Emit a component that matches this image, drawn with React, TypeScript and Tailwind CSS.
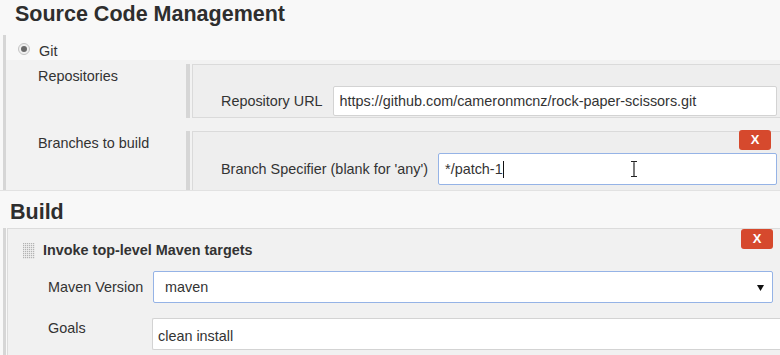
import React from "react";

function XButton({ className }: { className: string }) {
  return (
    <div
      className={`absolute w-[32px] h-[20px] rounded-[3px] bg-[#d6492d] text-white font-bold text-[13px] leading-[20px] text-center ${className}`}
    >
      X
    </div>
  );
}

function DragHandle() {
  const dots: React.ReactNode[] = [];
  for (let r = 0; r < 8; r++) {
    for (let c = 0; c < 6; c++) {
      dots.push(<rect key={`${r}-${c}`} x={c * 2} y={r * 2} width="1.2" height="1.2" fill="#b3b3b3" />);
    }
  }
  return (
    <svg width="12" height="16" viewBox="0 0 12 16" className="shrink-0">
      {dots}
    </svg>
  );
}

export default function App() {
  return (
    <div className="w-[780px] h-[355px] overflow-hidden bg-[#f8f8f8] text-[#333] font-['Liberation_Sans',Arial,sans-serif] text-[14.4px]">
      {/* Source Code Management header */}
      <div className="h-[35px] pl-[15px] pt-[1px]">
        <h2 className="text-[21.5px] font-bold leading-[26px] text-[#2e2e2e]">Source Code Management</h2>
      </div>

      {/* SCM body */}
      <div className="ml-[3px] border-l-[3px] border-[#d6d6d6] h-[155px] flex flex-col">
        {/* Git row */}
        <div className="h-[25px] flex items-start pt-[8px] pl-[12px]">
          <div className="w-[12px] h-[12px] rounded-full border border-[#c4c4c4] bg-[#f0f0f0] flex items-center justify-center mt-[0px]">
            <div className="w-[6px] h-[6px] rounded-full bg-[#6a6a6a]" />
          </div>
          <span className="ml-[9px] leading-[16px]">Git</span>
        </div>

        <div className="flex-1 flex flex-col bg-[#f2f2f2]">
          {/* Repositories row */}
          <div className="h-[64px] flex">
            <div className="w-[180px] pl-[32px] pt-[8px] leading-[16px]">Repositories</div>
            <div className="flex-1 flex pt-[4px] pb-[6px]">
              <div className="w-[4px] bg-[#d6d6d6]" />
              <div className="flex-1 ml-[2px] bg-[#eeeeee] border-t border-b border-l border-[#dadada] flex items-end pb-[1px] pl-[28px] pr-[3px]">
                <span className="leading-[16px] mb-[7px]">Repository URL</span>
                <div className="ml-[10px] flex-1 h-[30px] bg-white border border-[#d3d3d3] rounded-[2px] flex items-center pl-[6px] leading-[16px]">
                  https://github.com/cameronmcnz/rock-paper-scissors.git
                </div>
              </div>
            </div>
          </div>

          {/* Branches row */}
          <div className="flex-1 flex">
            <div className="w-[180px] pl-[32px] pt-[11px] leading-[16px]">Branches to build</div>
            <div className="flex-1 flex pt-[7px]">
              <div className="w-[4px] bg-[#d6d6d6]" />
              <div className="relative flex-1 ml-[2px] bg-[#eeeeee] border-t border-l border-[#dadada] flex items-start pt-[21px] pl-[28px] pr-[3px]">
                <XButton className="right-[9px] top-[-2px]" />
                <span className="leading-[16px] mt-[8px]">Branch Specifier (blank for 'any')</span>
                <div className="relative ml-[10px] flex-1 h-[32px] bg-white border border-[#95b3e6] rounded-[2px] flex items-center pl-[6px] leading-[16px]">
                  <span>*/patch-1</span>
                  <span className="inline-block w-[1px] h-[17px] bg-[#111]" />
                  <svg className="absolute left-[191px] top-[6px]" width="8" height="18" viewBox="0 0 8 18">
                    <path d="M1 1.5h2.5l0.5 0.5 0.5-0.5H7M4 2v14M1 16.5h2.5l0.5-0.5 0.5 0.5H7" stroke="#222" strokeWidth="1.2" fill="none" />
                  </svg>
                </div>
              </div>
            </div>
          </div>
        </div>
      </div>

      {/* Build header */}
      <div className="h-[38px] border-t border-[#e2e2e2] pl-[10px] pt-[9px]">
        <h2 className="text-[21.5px] font-bold leading-[24px] text-[#2e2e2e]">Build</h2>
      </div>

      {/* Builder */}
      <div className="ml-[3px] border-l-[3px] border-[#d6d6d6] h-[127px] flex">
        <div className="relative flex-1 ml-[1px] bg-[#f1f1f1] border-t border-l border-[#dcdcdc] flex flex-col">
          <XButton className="right-[7px] top-[0px]" />
          <div className="flex items-center pl-[15px] pt-[13px] h-[30px]">
            <DragHandle />
            <span className="ml-[8px] font-bold leading-[17px]">Invoke top-level Maven targets</span>
          </div>
          <div className="flex items-center mt-[12px] pl-[40px]">
            <span className="w-[105px] leading-[16px]">Maven Version</span>
            <div className="relative w-[620px] h-[32px] bg-white border border-[#95b3e6] rounded-[2px] flex items-center pl-[11px] leading-[16px]">
              maven
              <svg className="absolute right-[8px] top-[13px]" width="7" height="6" viewBox="0 0 7 6">
                <path d="M0 0h7L3.5 6z" fill="#111" />
              </svg>
            </div>
          </div>
          <div className="flex items-start mt-[15px] pl-[40px]">
            <span className="w-[104px] leading-[16px] mt-[2px]">Goals</span>
            <div className="flex-1 h-[32px] bg-white border border-[#d3d3d3] rounded-l-[2px] border-r-0 flex items-center pt-[3px] pl-[5px] leading-[16px]">
              clean install
            </div>
          </div>
        </div>
      </div>
    </div>
  );
}
